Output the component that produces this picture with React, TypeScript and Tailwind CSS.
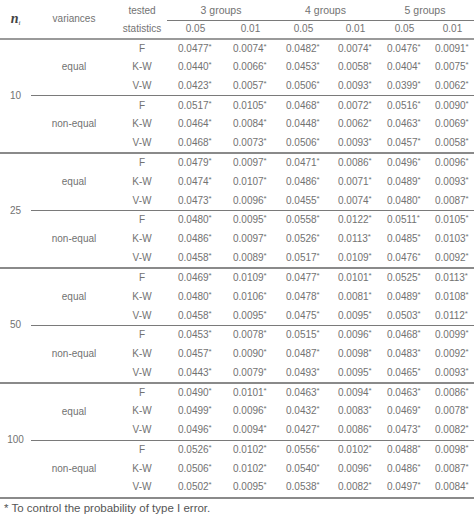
import React from "react";

type Row = { stat: string; vals: string[] };
type Block = { n: string; equal: Row[]; nonEqual: Row[] };

const mk = (stat: string, s: string): Row => ({ stat, vals: s.split(" ") });

const blocks: Block[] = [
  {
    n: "10",
    equal: [
      mk("F", "0.0477 0.0074 0.0482 0.0074 0.0476 0.0091"),
      mk("K-W", "0.0440 0.0066 0.0453 0.0058 0.0404 0.0075"),
      mk("V-W", "0.0423 0.0057 0.0506 0.0093 0.0399 0.0062"),
    ],
    nonEqual: [
      mk("F", "0.0517 0.0105 0.0468 0.0072 0.0516 0.0090"),
      mk("K-W", "0.0464 0.0084 0.0448 0.0062 0.0463 0.0069"),
      mk("V-W", "0.0468 0.0073 0.0506 0.0093 0.0457 0.0058"),
    ],
  },
  {
    n: "25",
    equal: [
      mk("F", "0.0479 0.0097 0.0471 0.0086 0.0496 0.0096"),
      mk("K-W", "0.0474 0.0107 0.0486 0.0071 0.0489 0.0093"),
      mk("V-W", "0.0473 0.0096 0.0455 0.0074 0.0480 0.0087"),
    ],
    nonEqual: [
      mk("F", "0.0480 0.0095 0.0558 0.0122 0.0511 0.0105"),
      mk("K-W", "0.0486 0.0097 0.0526 0.0113 0.0485 0.0103"),
      mk("V-W", "0.0458 0.0089 0.0517 0.0109 0.0476 0.0092"),
    ],
  },
  {
    n: "50",
    equal: [
      mk("F", "0.0469 0.0109 0.0477 0.0101 0.0525 0.0113"),
      mk("K-W", "0.0480 0.0106 0.0478 0.0081 0.0489 0.0108"),
      mk("V-W", "0.0458 0.0095 0.0475 0.0095 0.0503 0.0112"),
    ],
    nonEqual: [
      mk("F", "0.0453 0.0078 0.0515 0.0096 0.0468 0.0099"),
      mk("K-W", "0.0457 0.0090 0.0487 0.0098 0.0483 0.0092"),
      mk("V-W", "0.0443 0.0079 0.0493 0.0095 0.0465 0.0093"),
    ],
  },
  {
    n: "100",
    equal: [
      mk("F", "0.0490 0.0101 0.0463 0.0094 0.0463 0.0086"),
      mk("K-W", "0.0499 0.0096 0.0432 0.0083 0.0469 0.0078"),
      mk("V-W", "0.0496 0.0094 0.0427 0.0086 0.0473 0.0082"),
    ],
    nonEqual: [
      mk("F", "0.0526 0.0102 0.0556 0.0102 0.0488 0.0098"),
      mk("K-W", "0.0506 0.0102 0.0540 0.0096 0.0486 0.0087"),
      mk("V-W", "0.0502 0.0095 0.0538 0.0082 0.0497 0.0084"),
    ],
  },
];

const colWidths = [31, 86, 50, 55, 53, 52, 49, 48, 50];

function SubRows({ rows, label, n, last }: { rows: Row[]; label: string; n?: string; last: boolean }) {
  const line = last ? "border-b-2 border-[#8a8a8a]" : "border-b border-[#7a7a7a]";
  return (
    <>
      {rows.map((r, i) => {
        const isLast = i === rows.length - 1;
        const b = isLast ? line : "";
        return (
          <tr key={r.stat} className={isLast ? "h-[19.4px]" : "h-[19px]"}>
            {n && i === 0 && (
              <td rowSpan={6} className="border-b-2 border-[#8a8a8a] p-0 text-center align-middle">
                {n}
              </td>
            )}
            {i === 0 && (
              <td rowSpan={3} className={`${line} p-0 text-center align-middle`}>
                {label}
              </td>
            )}
            <td className={`${b} p-0 text-center`}>{r.stat}</td>
            {r.vals.map((v, j) => (
              <td key={j} className={`${b} p-0 pl-[11px] text-left whitespace-nowrap`}>
                {v}
                <span className="relative top-[-3px] text-[8px]">*</span>
              </td>
            ))}
          </tr>
        );
      })}
    </>
  );
}

export default function App() {
  return (
    <div className="w-[474px] bg-white text-[#727272] text-[10px] leading-none" style={{ fontFamily: '"Liberation Sans", Arial, sans-serif' }}>
      <table className="w-[474px] table-fixed border-collapse">
        <colgroup>
          {colWidths.map((w, i) => (
            <col key={i} style={{ width: w }} />
          ))}
        </colgroup>
        <thead>
          <tr className="h-[20px]">
            <td rowSpan={2} className="border-b-2 border-[#9a9a9a] p-0 text-center align-middle">
              <span className="font-bold italic text-[14px] text-[#444]" style={{ fontFamily: '"Liberation Serif", serif' }}>
                n<sub className="text-[7px] font-normal">i</sub>
              </span>
            </td>
            <td rowSpan={2} className="border-b-2 border-[#9a9a9a] p-0 text-center align-middle">
              variances
            </td>
            <td className="p-0 pt-[1px] text-center">tested</td>
            {["3 groups", "4 groups", "5 groups"].map((g) => (
              <td key={g} colSpan={2} className="border-b border-[#7a7a7a] p-0 pt-[1px] text-center text-[10.5px]">
                {g}
              </td>
            ))}
          </tr>
          <tr className="h-[18.5px]">
            <td className="border-b-2 border-[#9a9a9a] p-0 text-center">statistics</td>
            {["0.05", "0.01", "0.05", "0.01", "0.05", "0.01"].map((a, i) => (
              <td key={i} className="border-b-2 border-[#9a9a9a] p-0 pl-[11px] text-left">
                <span className="inline-block w-[35px] text-center">{a}</span>
              </td>
            ))}
          </tr>
        </thead>
        <tbody>
          {blocks.map((bl) => (
            <React.Fragment key={bl.n}>
              <SubRows rows={bl.equal} label="equal" n={bl.n} last={false} />
              <SubRows rows={bl.nonEqual} label="non-equal" last={true} />
            </React.Fragment>
          ))}
        </tbody>
      </table>
      <p className="mt-[4px] pl-[4px] text-[11.5px] text-[#555]">* To control the probability of type I error.</p>
    </div>
  );
}
